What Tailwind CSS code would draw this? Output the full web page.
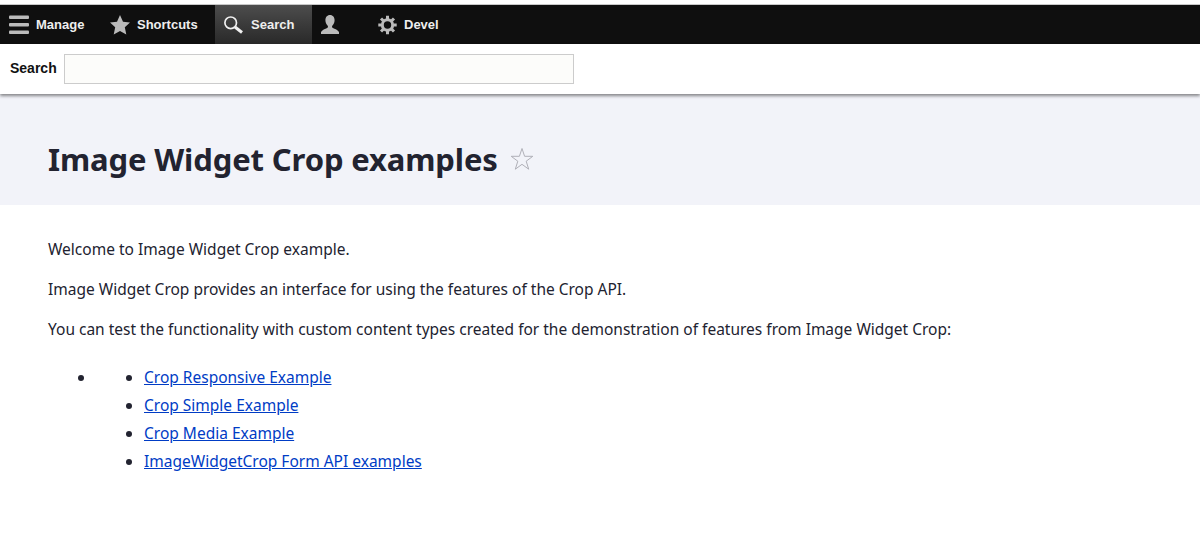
<!DOCTYPE html>
<html lang="en">
<head>
    <meta charset="UTF-8">
    <title>Image Widget Crop examples</title>
    <script src="https://cdn.jsdelivr.net/npm/@tailwindcss/browser@4"></script>
</head>
<body class="bg-white h-[548px] overflow-hidden font-['Noto_Sans',sans-serif] text-[#222330]">
    <!-- Toolbar -->
    <div class="h-[5px] bg-white border-b border-[#c8c8c8]"></div>
    <nav class="h-[39px] bg-[#0f0f0f] flex font-['Liberation_Sans',sans-serif] text-[13px] font-bold text-[#eeeeee]">
        <a class="w-[97px] flex items-center pl-[9px] gap-[7px]">
            <svg class="w-5 h-5" viewBox="0 0 20 20" fill="#bbbbbb"><rect y="0.500" width="20" height="3.600" rx="1"/><rect y="8" width="20" height="3.600" rx="1"/><rect y="15.500" width="20" height="3.600" rx="1"/></svg>
            Manage
        </a>
        <a class="w-[118px] flex items-center pl-[13px] gap-[7px]">
            <svg class="w-5 h-5" viewBox="0 0 20 20" fill="#bbbbbb"><path d="M10 0l3 6.800 7 .7-5.200 4.700 1.500 7.300L10 15.900 3.700 19.500l1.500-7.300L0 7.500l7-.7z"/></svg>
            Shortcuts
        </a>
        <a class="w-[97px] flex items-center pl-[9px] gap-[7px] bg-linear-to-b from-[#4d4d4d] to-[#292929]">
            <svg class="w-5 h-5" viewBox="0 0 20 20" fill="none" stroke="#f0f0f0"><circle cx="6.700" cy="7.800" r="5.800" stroke-width="1.700"/><path d="M11 12L18 17.500" stroke-width="3"/></svg>
            Search
        </a>
        <a class="w-[54px] flex items-center pl-[8px]">
            <svg class="w-5 h-5" viewBox="0 0 20 20" fill="#bbbbbb"><path d="M10 0c3 0 4.600 2.300 4.600 5.200 0 2.500-1.200 4.500-2.300 5.600-.5.600-.3 1.700.5 2.100 2 .9 5.200 2 6.200 4.100V19H1v-2c1-2.100 4.200-3.200 6.200-4.100.8-.4 1-1.500.5-2.100C6.600 9.700 5.400 7.700 5.400 5.200 5.400 2.300 7 0 10 0z"/></svg>
        </a>
        <a class="flex items-center pl-[12px] gap-[6px]">
            <svg class="w-5 h-5" viewBox="0 0 20 20" fill="none" stroke="#bbbbbb"><circle cx="9.500" cy="10" r="5.200" stroke-width="3"/><path d="M9.500 0.800V4M9.500 16v3.200M0.300 10H3.500M15.500 10h3.200M3 3.500l2.300 2.300M13.700 14.200L16 16.500M16 3.500l-2.300 2.300M5.300 14.200L3 16.500" stroke-width="3"/></svg>
            Devel
        </a>
    </nav>
    <!-- Search tray -->
    <div class="relative z-10 h-[50px] bg-white shadow-[0_2px_3px_0_rgba(0,0,0,0.45)] flex items-center pl-[10px] gap-[7px] font-['Liberation_Sans',sans-serif]">
        <label class="text-[14px] font-bold text-[#111111] pb-[2px]">Search</label>
        <input type="text" class="w-[510px] h-[30px] bg-[#fcfcfa] border border-[#cccccc]">
    </div>
    <!-- Page title -->
    <header class="h-[111px] bg-[#f2f3f9] pl-[48px] pt-[42px] flex gap-[12px] items-start">
        <h1 class="text-[31px] leading-[46px] font-bold tracking-[-0.13px] text-[#222330]">Image Widget Crop examples</h1>
        <svg class="w-[24px] h-[24px] mt-[11px]" viewBox="0 0 24 24" fill="none" stroke="#b0b0b8"><path d="M12 1.500l2.600 7.800h8.200l-6.600 4.900 2.500 8-6.700-4.900-6.700 4.900 2.500-8-6.600-4.900h8.200z"/></svg>
    </header>
    <!-- Content -->
    <main class="pl-[48px] pt-[34px] text-[15.500px] leading-[20px]">
        <p class="mb-[20px]">Welcome to Image Widget Crop example.</p>
        <p class="mb-[20px]">Image Widget Crop provides an interface for using the features of the Crop API.</p>
        <p class="mb-[24px]">You can test the functionality with custom content types created for the demonstration of features from Image Widget Crop:</p>
        <ul class="list-disc ml-[48px]">
            <li class="pl-[48px]">
                <ul class="list-disc text-[#003cc5] underline leading-[28px]">
                    <li class="marker:text-[#222330]"><a href="#">Crop Responsive Example</a></li>
                    <li class="marker:text-[#222330]"><a href="#">Crop Simple Example</a></li>
                    <li class="marker:text-[#222330]"><a href="#">Crop Media Example</a></li>
                    <li class="marker:text-[#222330]"><a href="#">ImageWidgetCrop Form API examples</a></li>
                </ul>
            </li>
        </ul>
    </main>
</body>
</html>
